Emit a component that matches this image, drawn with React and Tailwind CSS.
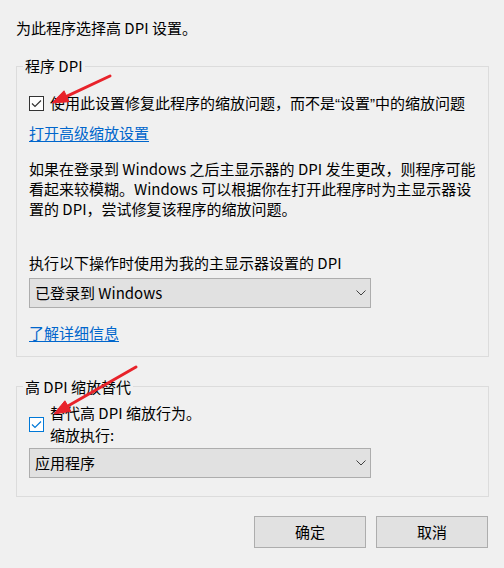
import React from 'react';

const font = { fontFamily: '"Noto Sans CJK SC", "Noto Sans", sans-serif' };

function Chevron() {
  return (
    <svg width="10" height="6" viewBox="0 0 10 6" className="mr-[4px]">
      <path d="M0.5 0.5 L5 5 L9.5 0.5" fill="none" stroke="#404040" strokeWidth="1" />
    </svg>
  );
}

function Select({ value }) {
  return (
    <div className="flex h-[30px] w-[342px] items-center justify-between border border-[#adadad] bg-[#e1e1e1] pl-[5px]">
      <span className="leading-[20px]">{value}</span>
      <Chevron />
    </div>
  );
}

function Checkbox({ blue }) {
  const color = blue ? '#0078d7' : '#333333';
  return (
    <span
      className={`flex h-[15px] w-[15px] shrink-0 items-center justify-center border bg-white ${
        blue ? 'border-[#0078d7]' : 'border-[#333333]'
      }`}
    >
      <svg width="13" height="13" viewBox="0 0 13 13">
        <path d="M2 6.5 L5 9.5 L11 3.5" fill="none" stroke={color} strokeWidth="1.2" />
      </svg>
    </span>
  );
}

function GroupLabel({ children, offset }) {
  return (
    <div className={`flex ${offset}`}>
      <span className="ml-[6px] bg-[#f0f0f0] px-[2px] leading-[20px]">{children}</span>
    </div>
  );
}

// narrow Latin-width quotes, as in the original dialog font
const Q = ({ children }) => <span className="font-['Liberation_Sans']">{children}</span>;

export default function App() {
  return (
    <div
      className="relative h-[568px] w-[504px] overflow-hidden bg-[#f0f0f0] pt-[18px] text-[15px] text-black"
      style={font}
    >
      <p className="pl-[16px] leading-[20px]">为此程序选择高 DPI 设置。</p>

      <div className="ml-[16px] mr-[15px] mt-[28px] border border-[#dcdcdc] pb-[13px] pl-[12px]">
        <GroupLabel offset="-mt-[11px] -ml-[12px]">程序 DPI</GroupLabel>
        <div className="mt-[17px] flex h-[20px] items-center gap-[6px] leading-[20px]">
          <Checkbox />
          <span className="whitespace-nowrap">
            使用此设置修复此程序的缩放问题，而不是<Q>“</Q>设置<Q>”</Q>中的缩放问题
          </span>
        </div>
        <a className="mt-[10px] block w-fit leading-[20px] text-[#0066cc] underline underline-offset-2">
          打开高级缩放设置
        </a>
        <div className="mt-[16px] leading-[20px] whitespace-nowrap">
          <div>如果在登录到 Windows 之后主显示器的 DPI 发生更改，则程序可能</div>
          <div>看起来较模糊。Windows 可以根据你在打开此程序时为主显示器设</div>
          <div>置的 DPI，尝试修复该程序的缩放问题。</div>
        </div>
        <p className="mt-[34px] leading-[20px]">执行以下操作时使用为我的主显示器设置的 DPI</p>
        <div className="mt-[5px]">
          <Select value="已登录到 Windows" />
        </div>
        <a className="mt-[15px] block w-fit leading-[20px] text-[#0066cc] underline underline-offset-2">
          了解详细信息
        </a>
      </div>

      <div className="ml-[16px] mr-[15px] mt-[29px] border border-[#dcdcdc] pb-[18px] pl-[12px]">
        <GroupLabel offset="-mt-[10px] -ml-[12px]">高 DPI 缩放替代</GroupLabel>
        <div className="mt-[5px] flex items-center gap-[6px] leading-[22px]">
          <Checkbox blue />
          <div>
            <div>替代高 DPI 缩放行为。</div>
            <div>缩放执行:</div>
          </div>
        </div>
        <div className="mt-[2px]">
          <Select value="应用程序" />
        </div>
      </div>

      <div className="mt-[19px] flex justify-end gap-[10px] pr-[16px]">
        <button className="h-[32px] w-[112px] border border-[#adadad] bg-[#e1e1e1]">确定</button>
        <button className="h-[32px] w-[112px] border border-[#adadad] bg-[#e1e1e1]">取消</button>
      </div>

      <svg className="pointer-events-none absolute inset-0" width="504" height="568">
        <g fill="#e8232b" stroke="#e8232b">
          <line x1="110" y1="76" x2="66.5" y2="96.3" strokeWidth="3" strokeLinecap="round" />
          <polygon points="52,103 69,101.7 64,90.8" strokeWidth="1" strokeLinejoin="round" />
          <line x1="136" y1="367" x2="67.9" y2="406" strokeWidth="3" strokeLinecap="round" />
          <polygon points="54,414 70.9,411.3 64.9,400.8" strokeWidth="1" strokeLinejoin="round" />
        </g>
      </svg>
    </div>
  );
}
